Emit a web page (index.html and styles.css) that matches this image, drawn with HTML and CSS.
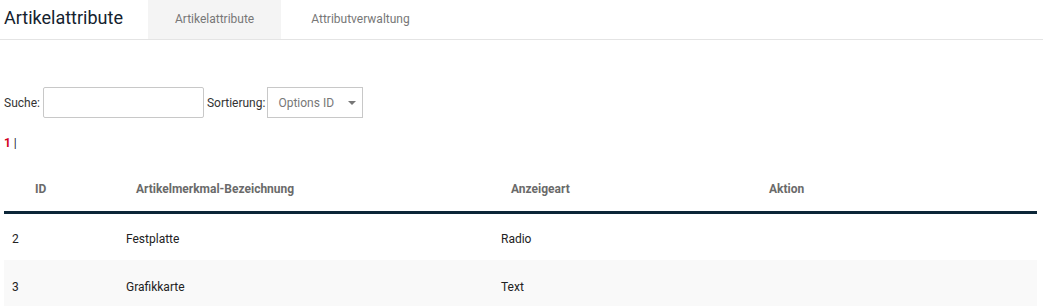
FILE: index.html
```html
<!DOCTYPE html>
<html lang="de">
<head>
    <meta charset="UTF-8">
    <title>Artikelattribute</title>
    <link rel="stylesheet" href="styles.css">
</head>
<body>
    <!-- Page header with tabs -->
    <div class="page-header">
        <h1 class="page-title">Artikelattribute</h1>
        <div class="tabs">
            <div class="tab active">Artikelattribute</div>
            <div class="tab">Attributverwaltung</div>
        </div>
    </div>

    <div class="content">
        <!-- Filter -->
        <div class="filter">
            <label for="search">Suche:</label>
            <input type="text" id="search" class="input-search">
            <label for="sort">Sortierung:</label>
            <div class="select">
                <span>Options ID</span>
                <span class="caret"></span>
            </div>
        </div>

        <div class="pager"><span class="current">1</span> |</div>

        <table class="list">
            <colgroup>
                <col class="c-id">
                <col class="c-name">
                <col class="c-type">
                <col>
            </colgroup>
            <thead>
                <tr>
                    <th class="th-id">ID</th>
                    <th>Artikelmerkmal-Bezeichnung</th>
                    <th>Anzeigeart</th>
                    <th>Aktion</th>
                </tr>
            </thead>
            <tbody>
                <tr>
                    <td>2</td>
                    <td>Festplatte</td>
                    <td>Radio</td>
                    <td></td>
                </tr>
                <tr>
                    <td>3</td>
                    <td>Grafikkarte</td>
                    <td>Text</td>
                    <td></td>
                </tr>
            </tbody>
        </table>
    </div>
</body>
</html>
```

FILE: styles.css
```css
* {
    margin: 0;
    padding: 0;
    box-sizing: border-box;
}

body {
    font-family: Roboto, "Liberation Sans", sans-serif;
    font-size: 12px;
    color: #222;
    background: #fff;
}

/* Header */
.page-header {
    display: flex;
    align-items: stretch;
    height: 40px;
    border-bottom: 1px solid #e4e4e4;
    padding-left: 4px;
}

.page-title {
    font-size: 18px;
    font-weight: normal;
    color: #14222e;
    line-height: 36px;
    margin-right: 25px;
}

.tabs {
    display: flex;
}

.tab {
    padding: 0 30px;
    line-height: 39px;
    color: #777;
    font-size: 12px;
}

.tab.active {
    background: #f4f4f4;
    padding: 0 27px;
}

/* Content */
.content {
    padding: 0 6px 0 4px;
}

.filter {
    display: flex;
    align-items: center;
    margin-top: 47px;
    color: #333;
}

.input-search {
    width: 161px;
    height: 31px;
    border: 1px solid #c8c8c8;
    border-radius: 2px;
    margin: 0 3px 0 3px;
    font-family: inherit;
}

.select {
    display: flex;
    align-items: center;
    justify-content: space-between;
    width: 96px;
    height: 31px;
    margin-left: 2px;
    padding: 0 6px 0 10px;
    border: 1px solid #c8c8c8;
    color: #777;
}

.caret {
    width: 0;
    height: 0;
    border-left: 4px solid transparent;
    border-right: 4px solid transparent;
    border-top: 4px solid #777;
}

.pager {
    margin-top: 17px;
    font-size: 12px;
    color: #1b2733;
    line-height: 16px;
}

.pager .current {
    color: #d2001e;
    font-weight: bold;
}

/* Table */
.list {
    width: 100%;
    border-collapse: collapse;
    table-layout: fixed;
    margin-top: 14px;
}

.c-id { width: 114px; }
.c-name { width: 375px; }
.c-type { width: 258px; }

.list th {
    text-align: left;
    font-weight: bold;
    color: #6a6a6a;
    height: 47px;
    padding: 2px 8px 0 18px;
    border-bottom: 3px solid #0c2638;
}

.list th.th-id {
    padding-left: 31px;
}

.list td {
    height: 48px;
    padding: 5px 8px 0;
    color: #222;
}

.list tbody tr:nth-child(even) td {
    background: #f9f9f9;
}
```
